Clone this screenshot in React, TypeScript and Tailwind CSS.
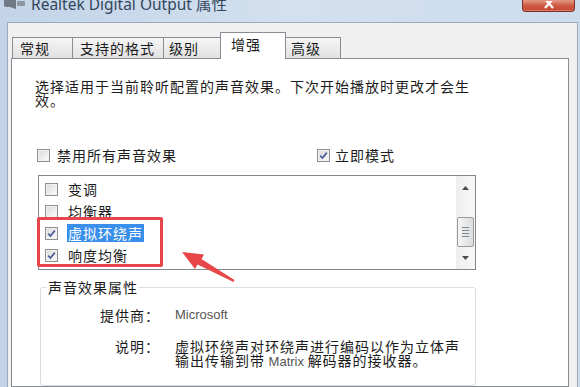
import React from "react";

function Check({ checked }: { checked?: boolean }) {
  return (
    <span className="flex h-[13px] w-[13px] shrink-0 items-center justify-center border border-[#8e8f8f] bg-linear-to-br from-[#d9d9d9] to-[#fbfbfb] shadow-[inset_0_0_0_1px_#f2f2f2]">
      {checked && (
        <svg width="9" height="9" viewBox="0 0 9 9">
          <path d="M1.2 4.6 L3.5 7 L7.8 1.6" stroke="#4b5d97" strokeWidth="1.7" fill="none" />
        </svg>
      )}
    </span>
  );
}

function Tab({ label, w, pl, selected }: { label: string; w: string; pl: string; selected?: boolean }) {
  if (selected) {
    return (
      <div className={`-ml-px flex h-[27px] ${w} ${pl} items-start border border-b-0 border-[#898c95] bg-white pt-[2px] leading-[18px]`}>
        {label}
      </div>
    );
  }
  return (
    <div
      className={`-ml-px mb-px flex h-[21px] ${w} ${pl} items-center border border-b-0 border-[#898c95] bg-linear-to-b from-[#f5f5f5] to-[#e2e2e2] leading-[18px]`}
    >
      {label}
    </div>
  );
}

export default function App() {
  return (
    <div className="relative flex h-[387px] w-[580px] flex-col overflow-hidden bg-linear-to-r from-[#c3d4e8] via-[#d2e0ef] to-[#cddced] font-['Liberation_Sans','Noto_Sans_CJK_SC',sans-serif] text-[14px] text-[#1b1b1b]">
      {/* title bar */}
      <div className="flex h-[22px] shrink-0 items-start">
        <svg width="26" height="10" viewBox="0 0 26 10" className="ml-[2px] shrink-0">
          <path d="M2 0 H8 L14 -1 V9 L8 7 H4 Q2 7 2 5 Z" fill="#6f7a86" />
          <rect x="15" y="1" width="8" height="5" rx="1" fill="#8e98a3" />
        </svg>
        <div className="-mt-[6px] ml-[3px] font-['Noto_Sans','Noto_Sans_CJK_SC',sans-serif] text-[15.5px] leading-[20px] text-[#34465c]">
          Realtek Digital Output 属性
        </div>
        <div className="ml-auto mr-[5px] flex h-[12px] w-[53px] items-end justify-center overflow-hidden rounded-b-[4px] border border-t-0 border-[#7b2f26] bg-linear-to-b from-[#e59a86] via-[#cf5a45] to-[#c4452f] shadow-[inset_0_-1px_0_#e07a66]">
          <svg width="12" height="9" viewBox="0 0 12 9" className="mb-[1px]">
            <path d="M2 -2 L10 7 M10 -2 L2 7" stroke="#ffffff" strokeWidth="2.2" />
          </svg>
        </div>
      </div>

      {/* client */}
      <div className="ml-[7px] mr-[2px] flex flex-1 flex-col border-l border-r border-t border-[#9aabbf] bg-[#f0f0f0] pl-[3px] pr-[8px] pt-[9px] font-['Noto_Sans_CJK_SC',sans-serif] tracking-[1px]">
        {/* tabs */}
        <div className="relative z-10 -mb-px flex items-end pl-[2px]">
          <Tab label="常规" w="w-[61px]" pl="pl-[7px]" />
          <Tab label="支持的格式" w="w-[92px]" pl="pl-[7px]" />
          <Tab label="级别" w="w-[58px]" pl="pl-[5px]" />
          <Tab label="增强" w="w-[66px]" pl="pl-[10px]" selected />
          <Tab label="高级" w="w-[56px]" pl="pl-[5px]" />
        </div>

        {/* panel */}
        <div className="flex flex-1 flex-col border border-[#898c95] bg-white pl-[23px] pt-[20px]">
          <p className="whitespace-nowrap leading-[14px]">
            选择适用于当前聆听配置的声音效果。下次开始播放时更改才会生
            <br />
            效。
          </p>

          <div className="mt-[40px] flex h-[16px] items-center">
            <div className="flex w-[280px] items-center gap-[7px] pl-[2px]">
              <Check />
              <span>禁用所有声音效果</span>
            </div>
            <div className="flex items-center gap-[5px] pl-[2px]">
              <Check checked />
              <span>立即模式</span>
            </div>
          </div>

          {/* list */}
          <div className="ml-[3px] mt-[12px] flex h-[95px] w-[438px] border border-[#828790] bg-white">
            <div className="flex-1 pt-[2px]">
              {[
                { t: "变调", c: false },
                { t: "均衡器", c: false },
                { t: "虚拟环绕声", c: true, sel: true },
                { t: "响度均衡", c: true },
              ].map((it) => (
                <div key={it.t} className="flex h-[22px] items-center pl-[6px]">
                  <Check checked={it.c} />
                  <span
                    className={
                      it.sel
                        ? "ml-[9px] h-[18px] bg-[#3a8fea] px-[1px] leading-[18px] text-white"
                        : "ml-[9px] h-[18px] px-[1px] leading-[18px]"
                    }
                  >
                    {it.t}
                  </span>
                </div>
              ))}
            </div>
            <div className="flex w-[19px] flex-col bg-linear-to-r from-[#eeeeee] to-[#f8f8f8]">
              <div className="flex h-[24px] items-center justify-center">
                <svg width="7" height="4" viewBox="0 0 7 4">
                  <path d="M0 4 L3.5 0 L7 4 Z" fill="#4d4d4d" />
                </svg>
              </div>
              <div className="h-[17px]" />
              <div className="mx-[1px] flex h-[30px] flex-col items-center justify-center gap-[2px] rounded-[2px] border border-[#9b9b9b] bg-linear-to-r from-[#f6f6f6] to-[#dcdcdc]">
                <span className="h-px w-[7px] bg-[#7a8593]" />
                <span className="h-px w-[7px] bg-[#7a8593]" />
                <span className="h-px w-[7px] bg-[#7a8593]" />
                <span className="h-px w-[7px] bg-[#7a8593]" />
              </div>
              <div className="flex flex-1 items-center justify-center">
                <svg width="7" height="4" viewBox="0 0 7 4">
                  <path d="M0 0 L3.5 4 L7 0 Z" fill="#4d4d4d" />
                </svg>
              </div>
            </div>
          </div>

          {/* group */}
          <fieldset className="ml-[5px] mt-[10px] w-[436px] flex-1 rounded-[3px] border border-[#d5dfe5]">
            <legend className="ml-[6px] px-[1px] leading-[14px]">声音效果属性</legend>
            <div className="mt-[11px] flex h-[20px] items-center">
              <div className="w-[119px] text-right">提供商：</div>
              <div className="ml-[15px] font-['Liberation_Sans',sans-serif] text-[13px] tracking-normal text-[#555555]">
                Microsoft
              </div>
            </div>
            <div className="mt-[14px] flex items-start leading-[14px]">
              <div className="w-[119px] text-right">说明：</div>
              <div className="ml-[15px] w-[290px]">
                虚拟环绕声对环绕声进行编码以作为立体声输出传输到带
                <span className="font-['Liberation_Sans',sans-serif] text-[13px] tracking-normal text-[#555555]"> Matrix </span>
                解码器的接收器。
              </div>
            </div>
          </fieldset>
        </div>
      </div>

      {/* annotation: red box */}
      <div className="absolute left-[37px] top-[217px] h-[50px] w-[126px] rounded-[2px] border-[3px] border-[#e5474c]" />
      {/* annotation: red arrow */}
      <svg className="absolute left-0 top-0" width="580" height="387" viewBox="0 0 580 387">
        <polygon
          points="182,252 204,254.5 201.5,259 234.5,280 233.5,282 197.5,264.5 195,269"
          fill="#e8474a"
        />
      </svg>
    </div>
  );
}
